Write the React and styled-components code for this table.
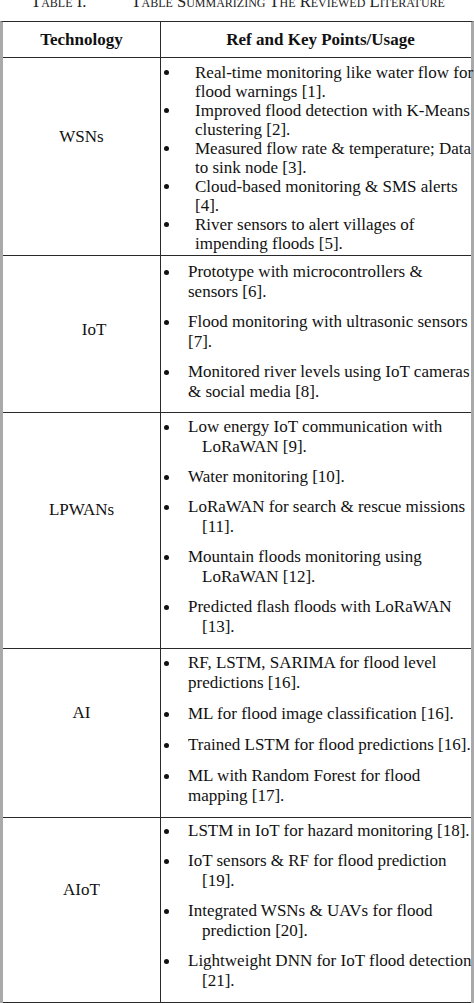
import React from 'react';
import styled, { createGlobalStyle } from 'styled-components';

const Global = createGlobalStyle`
  html, body { margin: 0; padding: 0; background: #fff; }
  body { font-family: "Liberation Serif", "Times New Roman", serif; color: #111; }
`;

const Page = styled.div`
  width: 474px;
  height: 1003px;
  overflow: hidden;
  box-sizing: border-box;
`;

const Title = styled.div`
  display: flex;
  justify-content: center;
  gap: 45px;
  margin-top: -7px;
  margin-bottom: 11px;
  padding-left: 2px;
  height: 17px;
  font-size: 16.6px;
  line-height: 17px;
  font-variant: small-caps;
  color: #222;
  white-space: nowrap;
`;

const Table = styled.div`
  width: 474px;
  box-sizing: border-box;
  border-left: 3px solid #a9a9a9;
  border-right: 3px solid #a9a9a9;
  border-top: 1px solid #2a2a2a;
`;

const Row = styled.div`
  display: grid;
  grid-template-columns: 158px 1fr;
  border-bottom: 1px solid #2a2a2a;
`;

const HeaderCell = styled.div`
  height: 35px;
  display: flex;
  align-items: center;
  justify-content: center;
  font-weight: bold;
  font-size: 17px;
  padding-left: ${p => p.$shift || 0}px;
  border-right: ${p => (p.$divider ? '1px solid #2a2a2a' : 'none')};
`;

const LabelCell = styled.div`
  display: flex;
  align-items: center;
  justify-content: center;
  font-size: 17px;
  border-right: 1px solid #2a2a2a;
  padding-left: ${p => p.$left || 0}px;
  padding-bottom: ${p => p.$bottom || 0}px;
  box-sizing: border-box;
`;

const ItemsCell = styled.div`
  display: flex;
  flex-direction: column;
  gap: ${p => p.$gap}px;
  padding-top: ${p => p.$pt}px;
  padding-bottom: ${p => p.$pb}px;
  font-size: 17px;
  line-height: ${p => p.$lh}px;
`;

const Item = styled.div`
  display: grid;
  grid-template-columns: ${p => p.$textLeft}px 1fr;
`;

const Bullet = styled.span`
  display: block;
  width: 5px;
  height: 5px;
  border-radius: 50%;
  background: #111;
  margin-left: 2.5px;
  margin-top: ${p => p.$top}px;
`;

const Lines = styled.div`
  display: flex;
  flex-direction: column;
`;

const Line = styled.span`
  display: block;
  white-space: nowrap;
  padding-left: ${p => p.$indent || 0}px;
`;

const rows = [
  {
    label: 'WSNs', labelLeft: 0, labelBottom: 39, textLeft: 34, lh: 19, gap: 0, pt: 4.5, pb: 2.5, cont: 0,
    items: [
      ['Real-time monitoring like water flow for', 'flood warnings [1].'],
      ['Improved flood detection with K-Means', 'clustering [2].'],
      ['Measured flow rate & temperature; Data', 'to sink node [3].'],
      ['Cloud-based monitoring & SMS alerts', '[4].'],
      ['River sensors to alert villages of', 'impending floods [5].'],
    ],
  },
  {
    label: 'IoT', labelLeft: 25, labelBottom: 8, textLeft: 27, lh: 20, gap: 10, pt: 6, pb: 10, cont: 0,
    items: [
      ['Prototype with microcontrollers &', 'sensors [6].'],
      ['Flood monitoring with ultrasonic sensors', '[7].'],
      ['Monitored river levels using IoT cameras', '& social media [8].'],
    ],
  },
  {
    label: 'LPWANs', labelLeft: 0, labelBottom: 41, textLeft: 27, lh: 20, gap: 10, pt: 4, pb: 11, cont: 14,
    items: [
      ['Low energy IoT communication with', 'LoRaWAN [9].'],
      ['Water monitoring [10].'],
      ['LoRaWAN for search & rescue missions', '[11].'],
      ['Mountain floods monitoring using', 'LoRaWAN [12].'],
      ['Predicted flash floods with LoRaWAN', '[13].'],
    ],
  },
  {
    label: 'AI', labelLeft: 0, labelBottom: 41, textLeft: 27, lh: 20, gap: 11, pt: 4, pb: 11, cont: 0,
    items: [
      ['RF, LSTM, SARIMA for flood level', 'predictions [16].'],
      ['ML for flood image classification [16].'],
      ['Trained LSTM for flood predictions [16].'],
      ['ML with Random Forest for flood', 'mapping [17].'],
    ],
  },
  {
    label: 'AIoT', labelLeft: 0, labelBottom: 41, textLeft: 27, lh: 20, gap: 10, pt: 3, pb: 11, cont: 14,
    items: [
      ['LSTM in IoT for hazard monitoring [18].'],
      ['IoT sensors & RF for flood prediction', '[19].'],
      ['Integrated WSNs & UAVs for flood', 'prediction [20].'],
      ['Lightweight DNN for IoT flood detection', '[21].'],
    ],
  },
];

export default function App() {
  return (
    <Page>
      <Global />
      <Title>
        <span>Table I.</span>
        <span>Table Summarizing The Reviewed Literature</span>
      </Title>
      <Table>
        <Row>
          <HeaderCell $divider>Technology</HeaderCell>
          <HeaderCell $shift={9}>Ref and Key Points/Usage</HeaderCell>
        </Row>
        {rows.map(r => (
          <Row key={r.label}>
            <LabelCell $left={r.labelLeft} $bottom={r.labelBottom}>{r.label}</LabelCell>
            <ItemsCell $gap={r.gap} $pt={r.pt} $pb={r.pb} $lh={r.lh}>
              {r.items.map((lines, i) => (
                <Item key={i} $textLeft={r.textLeft}>
                  <Bullet $top={r.lh / 2 - 2} />
                  <Lines>
                    {lines.map((t, j) => (
                      <Line key={j} $indent={j > 0 ? r.cont : 0}>{t}</Line>
                    ))}
                  </Lines>
                </Item>
              ))}
            </ItemsCell>
          </Row>
        ))}
      </Table>
    </Page>
  );
}
